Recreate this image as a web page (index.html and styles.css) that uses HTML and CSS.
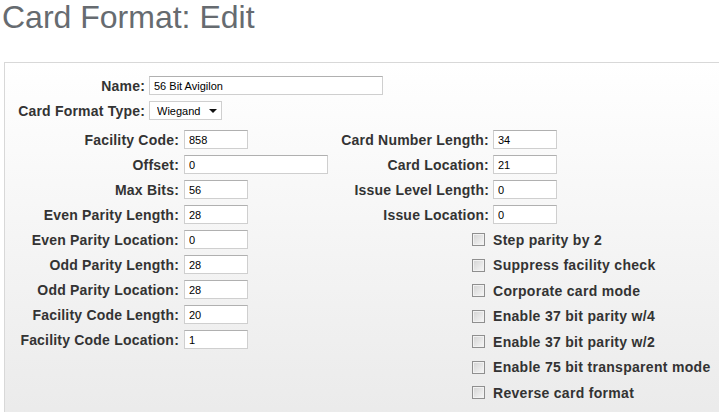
FILE: index.html
```html
<!DOCTYPE html>
<html lang="en">
<head>
    <meta charset="UTF-8">
    <title>Card Format: Edit</title>
    <link rel="stylesheet" href="styles.css">
</head>
<body>

    <h1>Card Format: Edit</h1>

    <div class="card">
        <div class="top-fields">
            <label class="lbl" for="name">Name:</label>
            <input type="text" id="name" class="txt txt-name" value="56 Bit Avigilon">

            <label class="lbl" for="type">Card Format Type:</label>
            <span class="select-wrap">
                <select id="type" class="sel">
                    <option>Wiegand</option>
                </select>
            </span>
        </div>

        <div class="columns">
            <div class="col col-left">
                <label class="lbl">Facility Code:</label>
                <input type="text" class="txt" value="858">

                <label class="lbl">Offset:</label>
                <input type="text" class="txt txt-wide" value="0">

                <label class="lbl">Max Bits:</label>
                <input type="text" class="txt" value="56">

                <label class="lbl">Even Parity Length:</label>
                <input type="text" class="txt" value="28">

                <label class="lbl">Even Parity Location:</label>
                <input type="text" class="txt" value="0">

                <label class="lbl">Odd Parity Length:</label>
                <input type="text" class="txt" value="28">

                <label class="lbl">Odd Parity Location:</label>
                <input type="text" class="txt" value="28">

                <label class="lbl">Facility Code Length:</label>
                <input type="text" class="txt" value="20">

                <label class="lbl">Facility Code Location:</label>
                <input type="text" class="txt" value="1">
            </div>

            <div class="col col-right">
                <label class="lbl">Card Number Length:</label>
                <input type="text" class="txt" value="34">

                <label class="lbl">Card Location:</label>
                <input type="text" class="txt" value="21">

                <label class="lbl">Issue Level Length:</label>
                <input type="text" class="txt" value="0">

                <label class="lbl">Issue Location:</label>
                <input type="text" class="txt" value="0">

                <input type="checkbox" id="c1" class="chk">
                <label class="chk-text" for="c1">Step parity by 2</label>

                <input type="checkbox" id="c2" class="chk">
                <label class="chk-text" for="c2">Suppress facility check</label>

                <input type="checkbox" id="c3" class="chk">
                <label class="chk-text" for="c3">Corporate card mode</label>

                <input type="checkbox" id="c4" class="chk">
                <label class="chk-text" for="c4">Enable 37 bit parity w/4</label>

                <input type="checkbox" id="c5" class="chk">
                <label class="chk-text" for="c5">Enable 37 bit parity w/2</label>

                <input type="checkbox" id="c6" class="chk">
                <label class="chk-text" for="c6">Enable 75 bit transparent mode</label>

                <input type="checkbox" id="c7" class="chk">
                <label class="chk-text" for="c7">Reverse card format</label>
            </div>
        </div>
    </div>

</body>
</html>
```

FILE: styles.css
```css
/* page */
body {
    margin: 0;
    overflow: hidden;
    font-family: "Liberation Sans", Arial, sans-serif;
    color: #333;
    background: #fff;
}

h1 {
    margin: 0 0 27px;
    padding-left: 2px;
    font-size: 32px;
    line-height: 35px;
    font-weight: normal;
    color: #666b70;
}

/* form card */
.card {
    margin-left: 4px;
    width: 740px;
    min-height: 370px;
    padding-top: 10px;
    border: 1px solid #d8d8d8;
    background: linear-gradient(to bottom, #ffffff 0%, #e9e9e9 100%);
}

.lbl {
    justify-self: end;
    font-size: 14px;
    font-weight: bold;
    letter-spacing: 0.2px;
    color: #333;
    white-space: nowrap;
}

.txt {
    box-sizing: border-box;
    width: 64px;
    height: 19px;
    margin: 0;
    padding: 0 4px;
    border: 1px solid #cfcfcf;
    border-top-color: #b0b0b0;
    background: #fff;
    font-family: "Liberation Sans", Arial, sans-serif;
    font-size: 11px;
    color: #000;
    outline: none;
}

.txt-name {
    width: 234px;
}

.txt-wide {
    width: 144px;
}

.top-fields {
    display: grid;
    grid-template-columns: 140px auto;
    grid-auto-rows: 25px;
    column-gap: 4px;
    align-items: center;
    justify-items: start;
}

.select-wrap {
    position: relative;
    display: inline-block;
}

.sel {
    box-sizing: border-box;
    width: 73px;
    height: 19px;
    margin: 0;
    padding: 0 0 0 7px;
    border: 1px solid #cfcfcf;
    border-radius: 0;
    background: #fff;
    font-family: "Liberation Sans", Arial, sans-serif;
    font-size: 11px;
    color: #000;
    appearance: none;
    -webkit-appearance: none;
}

.select-wrap::after {
    content: "";
    position: absolute;
    right: 5px;
    top: 8px;
    border-left: 4px solid transparent;
    border-right: 4px solid transparent;
    border-top: 4px solid #111;
    pointer-events: none;
}

/* two columns */
.columns {
    display: flex;
    margin-top: 4px;
}

.col {
    display: grid;
    align-items: center;
    justify-items: start;
    column-gap: 5px;
}

.col-left {
    width: 325px;
    grid-template-columns: 174px 1fr;
    grid-auto-rows: 25px;
}

.col-right {
    grid-template-columns: 159px auto;
    column-gap: 4px;
    grid-template-rows: repeat(4, 25px);
    grid-auto-rows: 25.5px;
}

.chk {
    justify-self: end;
    box-sizing: border-box;
    width: 13px;
    height: 13px;
    margin: 0 4px 0 0;
    border: 1px solid #8f8f8f;
    background: linear-gradient(135deg, #d3d3d3 0%, #f7f7f7 100%);
    box-shadow: inset 0 0 0 1px #f2f2f2;
    appearance: none;
    -webkit-appearance: none;
}

.chk-text {
    font-size: 14px;
    font-weight: bold;
    letter-spacing: 0.3px;
    color: #333;
    white-space: nowrap;
}
```
